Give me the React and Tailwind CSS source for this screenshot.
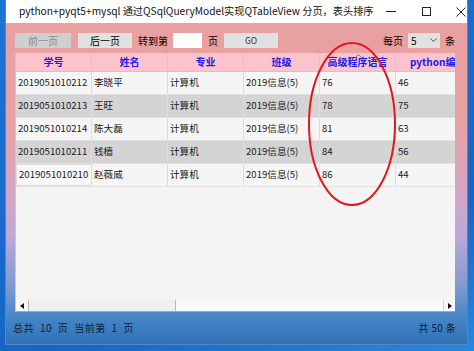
import React from "react";

const rows = [
  ["2019051010212", "李晓平", "计算机", "2019信息(5)", "76", "46"],
  ["2019051010213", "王旺", "计算机", "2019信息(5)", "78", "75"],
  ["2019051010214", "陈大磊", "计算机", "2019信息(5)", "81", "63"],
  ["2019051010211", "钱樯", "计算机", "2019信息(5)", "84", "56"],
  ["2019051010210", "赵薇威", "计算机", "2019信息(5)", "86", "44"],
];
const headers = ["学号", "姓名", "专业", "班级", "高级程序语言", "python编程"];

function TitleIcon() {
  return (
    <svg width="11" height="10" viewBox="0 0 11 10">
      <rect x="0.5" y="0.5" width="10" height="9" fill="#f4f4f4" stroke="#8a8a8a" />
      <rect x="1" y="1" width="9" height="2" fill="#4a7fc0" />
      <rect x="1" y="3" width="3" height="6" fill="#b8c6d8" />
    </svg>
  );
}

export default function App() {
  return (
    <div className="relative w-[474px] h-[351px] overflow-hidden bg-[linear-gradient(160deg,#1b74d6_0%,#1565c6_70%,#2a86dc_100%)] font-['Noto_Sans_CJK_SC',sans-serif] text-black">
      <div className="ml-[5px] w-[463px] h-[345px] flex flex-col border-x border-b border-[#5a86c0]">
        {/* title bar */}
        <div className="h-[23px] shrink-0 bg-white flex items-center pl-[7px]">
          <TitleIcon />
          <span className="ml-[6px] text-[10.2px] leading-none text-[#111] whitespace-nowrap">
            python+pyqt5+mysql 通过QSqlQueryModel实现QTableView 分页，表头排序
          </span>
          <div className="ml-auto flex h-full">
            <div className="w-[35px] flex items-center justify-center">
              <div className="w-[10px] h-px bg-[#222]" />
            </div>
            <div className="w-[35px] flex items-center justify-center">
              <div className="w-[9px] h-[9px] border border-[#222]" />
            </div>
            <div className="w-[35px] flex items-center justify-center">
              <svg width="10" height="10" viewBox="0 0 10 10">
                <path d="M0.5 0.5 L9.5 9.5 M9.5 0.5 L0.5 9.5" stroke="#222" strokeWidth="1" />
              </svg>
            </div>
          </div>
        </div>

        {/* body */}
        <div className="flex-1 flex flex-col pl-[9px] pr-[12px] bg-[linear-gradient(180deg,#eaa0a0_0%,#e8a0a4_30%,#d8a4c0_50%,#c0a8d8_66%,#7f9ad0_82%,#4585c6_92%,#2f72b6_100%)]">
          {/* toolbar */}
          <div className="mt-[10px] h-[15px] flex items-center text-[10px] leading-none">
            <div className="w-[56px] h-[15px] bg-[#cfcfcf] text-[#8c8c8c] flex items-center justify-center">前一页</div>
            <div className="ml-[7px] w-[54px] h-[15px] bg-[#e1e1e1] flex items-center justify-center">后一页</div>
            <span className="ml-[6px]">转到第</span>
            <div className="ml-[5px] w-[29px] h-[15px] bg-white" />
            <span className="ml-[6px]">页</span>
            <div className="ml-[6px] w-[54px] h-[15px] bg-[#e1e1e1] flex items-center justify-center text-[8.5px] text-[#333]">GO</div>
            <span className="ml-auto">每页</span>
            <div className="ml-[5px] w-[32px] h-[15px] bg-[#e1e1e1] flex items-center pl-[3px] pr-[3px]">
              <span>5</span>
              <svg className="ml-auto" width="7" height="5" viewBox="0 0 7 5">
                <path d="M0.5 0.5 L3.5 3.5 L6.5 0.5" stroke="#555" fill="none" strokeWidth="1" />
              </svg>
            </div>
            <span className="ml-[5px]">条</span>
          </div>

          {/* table */}
          <div className="mt-[5px] h-[259px] bg-[#f4f4f4] flex flex-col overflow-hidden border-l border-[#c8c8c8]">
            <div className="h-[19px] shrink-0 flex bg-[#fdc3cd] border-b border-[#d8c0c4]">
              {headers.map((h, i) => (
                <div
                  key={h}
                  className="relative w-[76px] shrink-0 border-r border-[#c9c9c9] flex items-center justify-center text-[10px] font-bold text-[#1c1ce8] whitespace-nowrap overflow-hidden leading-none"
                >
                  {i === 4 && (
                    <svg className="absolute top-[1px] left-[35px]" width="7" height="4" viewBox="0 0 7 4">
                      <path d="M0.5 3.5 L3.5 0.5 L6.5 3.5" stroke="#777" fill="none" strokeWidth="1" />
                    </svg>
                  )}
                  <span className={i === 5 ? "pl-[14px] self-center w-full" : ""}>{h}</span>
                </div>
              ))}
            </div>
            {rows.map((r, ri) => (
              <div
                key={ri}
                className={`h-[23px] shrink-0 flex border-b border-[#e0e0e0] ${ri % 2 === 1 ? "bg-[#d4d4d4]" : "bg-[#f5f5f5]"}`}
              >
                {r.map((c, ci) => (
                  <div
                    key={ci}
                    className={`w-[76px] shrink-0 border-r border-[#dcdcdc] flex items-center pl-[2px] text-[9.6px] leading-none text-[#1a1a1a] whitespace-nowrap ${ri === 4 && ci === 0 ? "border border-[#7a7a7a] bg-[#f8f8f8]" : ""}`}
                  >
                    {c}
                  </div>
                ))}
              </div>
            ))}
            <div className="flex-1" />
            {/* horizontal scrollbar */}
            <div className="h-[12px] shrink-0 flex bg-[#f7f7f7] border-b border-[#a8a8a8]">
              <div className="w-[12px] flex items-center justify-center">
                <svg width="4" height="6" viewBox="0 0 4 6"><path d="M4 0 L0 3 L4 6 Z" fill="#111" /></svg>
              </div>
              <div className="w-[148px] bg-[#f0f0f0] border-x border-[#b8b8b8]" />
              <div className="flex-1 bg-[#fafafa]" />
              <div className="w-[12px] flex items-center justify-center border-l border-[#cfcfcf]">
                <svg width="4" height="6" viewBox="0 0 4 6"><path d="M0 0 L4 3 L0 6 Z" fill="#111" /></svg>
              </div>
            </div>
          </div>

          {/* status */}
          <div className="flex-1 flex items-center justify-between text-[10px] leading-none text-[#0e1c36] pb-[1px]">
            <span className="-ml-[2px] whitespace-pre tracking-[0.6px]">总共  10  页  当前第  1  页</span>
            <span className="-mr-[1px] whitespace-pre tracking-[0.3px]">共 50 条</span>
          </div>
        </div>
      </div>

      {/* red annotation ellipse */}
      <svg className="absolute left-0 top-0 pointer-events-none" width="474" height="351" viewBox="0 0 474 351">
        <ellipse cx="352" cy="124" rx="43" ry="81" fill="none" stroke="#e4161b" strokeWidth="2" />
      </svg>
    </div>
  );
}
